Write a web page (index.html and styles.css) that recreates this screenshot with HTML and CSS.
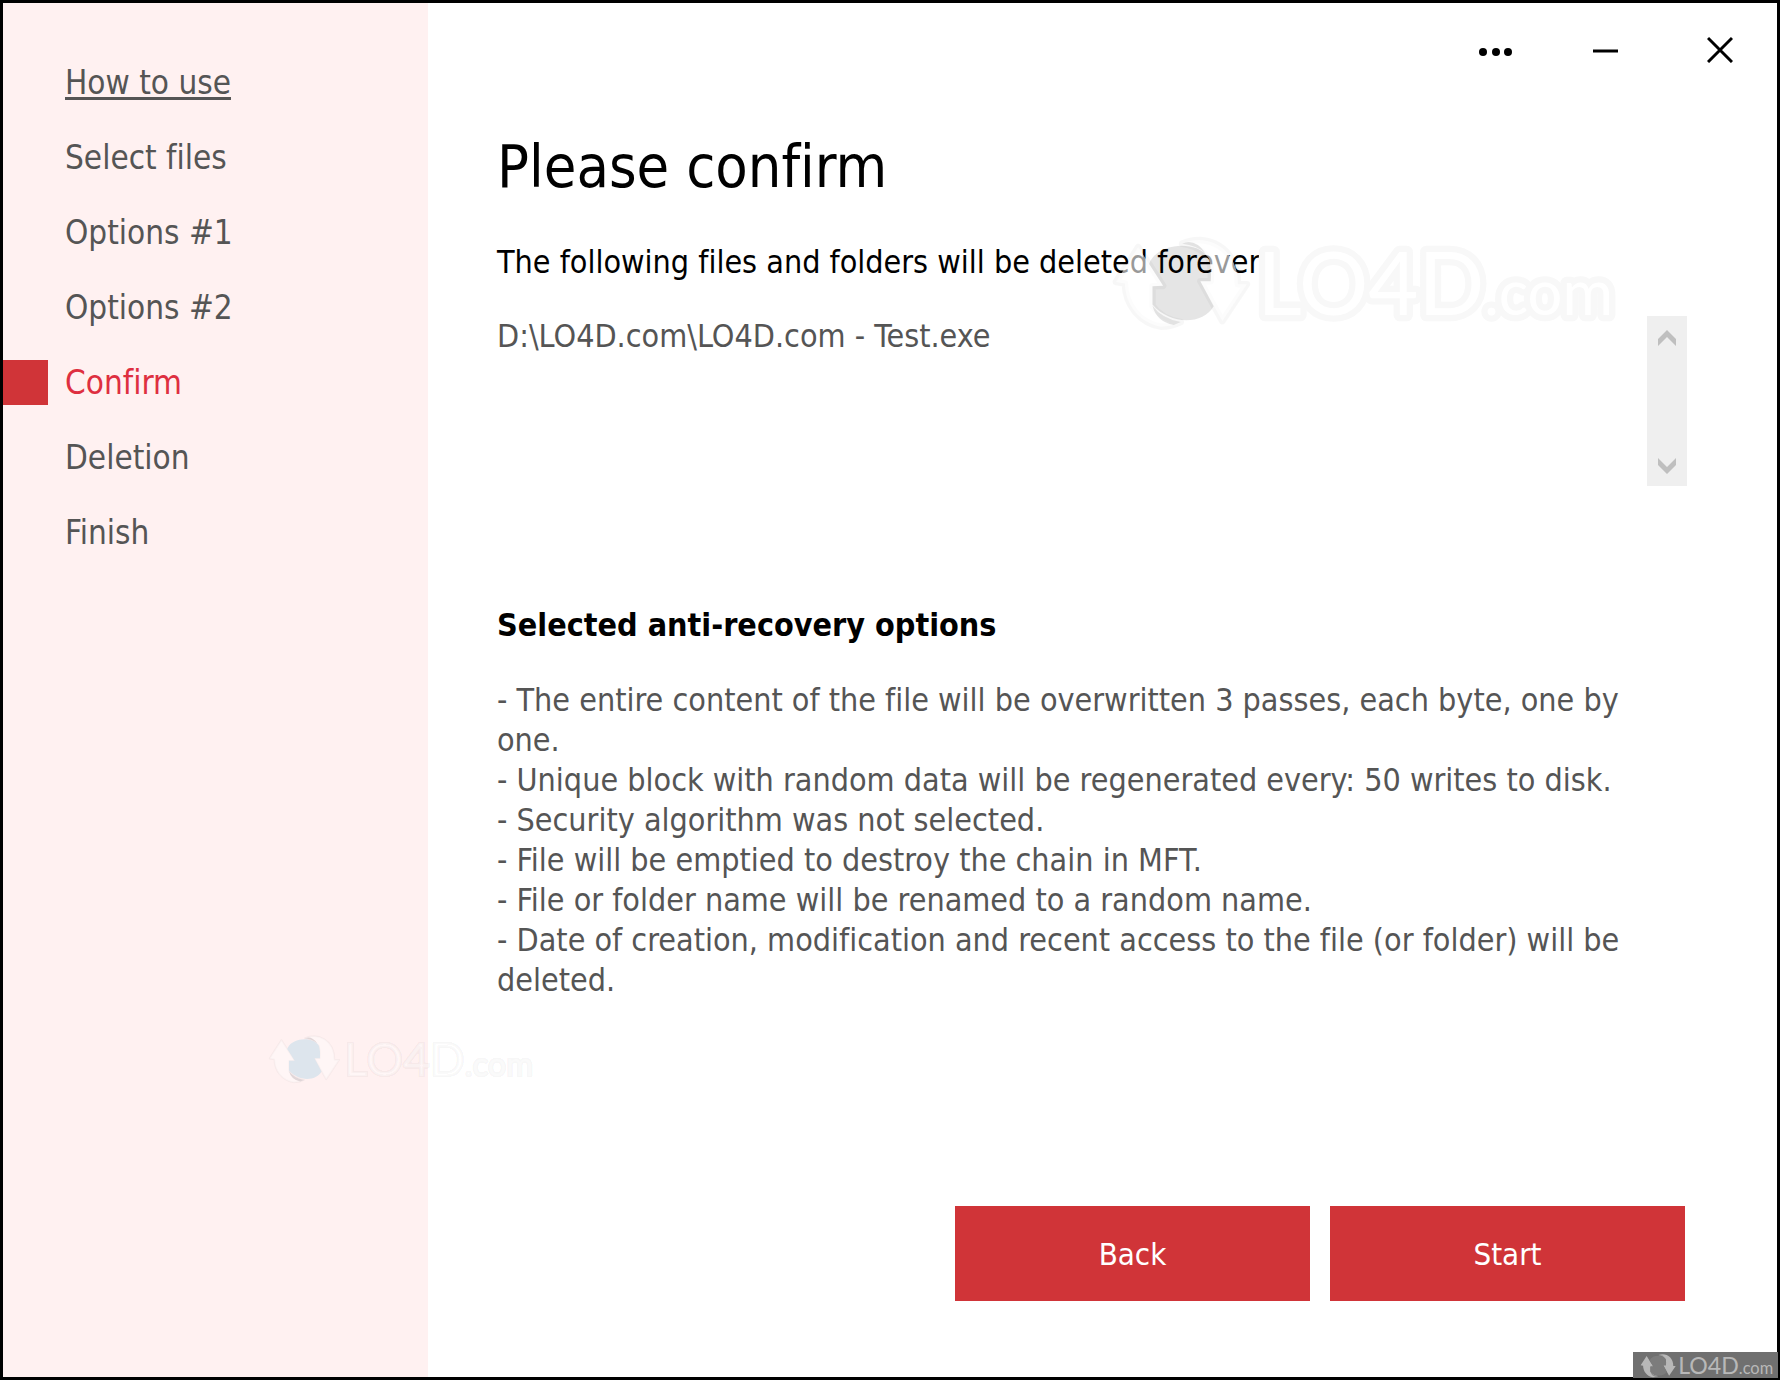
FILE: index.html
```html
<!DOCTYPE html>
<html lang="en">
<head>
    <meta charset="UTF-8">
    <meta name="viewport" content="width=device-width, initial-scale=1.0">
    <title>Please confirm</title>
    <link rel="stylesheet" href="styles.css">
</head>
<body>
    <svg class="defs" aria-hidden="true">
        <symbol id="arrows" viewBox="30 20 430 300" overflow="visible">
            <path d="M115 65 L190 182 L158 183 V242 Q185 280 243 291 Q215 305 185 305 C120 295 76 240 75 175 L48 170 Z"/>
            <path d="M368 288 L302 168 L333 168 Q336 130 328 100 Q300 62 247 55 C320 22 415 65 415 177 L442 177 Z"/>
            <path class="ball" d="M150 110 C180 48 300 45 328 100 Q336 130 333 168 L302 168 L342 243 C310 300 210 300 158 238 L158 183 L190 182 L148 116 Z"/>
            <path class="shade" d="M158 242 Q185 280 243 291 L222 300 Q170 290 158 242 Z M247 55 Q285 38 318 84 Q290 60 247 55 Z"/>
        </symbol>
    </svg>

    <div class="window">
        <nav class="steps">
            <a href="#" class="help">How to use</a>
            <a href="#">Select files</a>
            <a href="#">Options #1</a>
            <a href="#">Options #2</a>
            <a href="#" class="active" aria-current="step">Confirm</a>
            <a href="#">Deletion</a>
            <a href="#">Finish</a>
        </nav>

        <main class="content">
            <div class="window-buttons">
                <button type="button" aria-label="More">
                    <svg width="36" height="28" viewBox="0 0 36 28"><circle cx="6" cy="17" r="4"/><circle cx="19" cy="17" r="4"/><circle cx="31" cy="17" r="4"/></svg>
                </button>
                <button type="button" aria-label="Minimize">
                    <svg width="36" height="28" viewBox="0 0 36 28"><path d="M1 16 H26"/></svg>
                </button>
                <button type="button" aria-label="Close">
                    <svg width="26" height="28" viewBox="0 0 26 28"><path d="M1 3 L25 27 M25 3 L1 27"/></svg>
                </button>
            </div>

            <h1>Please confirm</h1>
            <p class="lead">The following files and folders will be deleted forever</p>

            <div class="files">
                <p>D:\LO4D.com\LO4D.com - Test.exe</p>
                <div class="scrollbar">
                    <button type="button" aria-label="Scroll up">
                        <svg width="18" height="16" viewBox="0 0 18 16"><path d="M0 9 L9 0 L18 9 V16 L9 7 L0 16 Z"/></svg>
                    </button>
                    <button type="button" aria-label="Scroll down">
                        <svg width="18" height="16" viewBox="0 0 18 16"><path d="M0 0 L9 9 L18 0 V7 L9 16 L0 7 Z"/></svg>
                    </button>
                </div>
            </div>

            <h2>Selected anti-recovery options</h2>
            <ul class="options">
                <li>- The entire content of the file will be overwritten 3 passes, each byte, one by one.</li>
                <li>- Unique block with random data will be regenerated every: 50 writes to disk.</li>
                <li>- Security algorithm was not selected.</li>
                <li>- File will be emptied to destroy the chain in MFT.</li>
                <li>- File or folder name will be renamed to a random name.</li>
                <li>- Date of creation, modification and recent access to the file (or folder) will be deleted.</li>
            </ul>

            <div class="actions">
                <button type="button">Back</button>
                <button type="button">Start</button>
            </div>
        </main>
    </div>

    <svg class="mark mark-top" viewBox="0 0 800 155">
        <use href="#arrows" x="-5" y="0" width="228" height="159"/>
        <text x="230" y="133">LO4D<tspan class="small">.com</tspan></text>
    </svg>
    <svg class="mark mark-side" viewBox="0 0 800 155">
        <use href="#arrows" x="-5" y="0" width="228" height="159"/>
        <text x="228" y="131">LO4D<tspan class="small">.com</tspan></text>
    </svg>
    <div class="badge">
        <svg class="mark-badge" viewBox="0 0 800 155">
            <use href="#arrows" x="-5" y="0" width="228" height="159"/>
            <text x="228" y="133">LO4D<tspan class="small">.com</tspan></text>
        </svg>
    </div>
</body>
</html>
```

FILE: styles.css
```css
* {
    box-sizing: border-box;
    margin: 0;
    padding: 0;
}

body {
    position: relative;
    background-color: #fff;
    color: #555;
    font-family: "DejaVu Sans Condensed", "Noto Sans", sans-serif;
    font-size: 32px;
    font-variant-ligatures: none;
    line-height: 40px;
}

button {
    border: none;
    background: none;
    font: inherit;
    cursor: pointer;
}

.defs {
    position: absolute;
    width: 0;
    height: 0;
}

.window {
    display: grid;
    grid-template-columns: 425px 1fr;
    min-height: 100vh;
    border: 3px solid #000;
}

/* steps */

.steps {
    padding-top: 42px;
    background-color: #fff1f1;
}

.steps a {
    display: flex;
    align-items: center;
    height: 75px;
    padding-left: 62px;
    color: #555;
    font-size: 33px;
    text-decoration: none;
}

.steps .help {
    text-decoration: underline;
    text-decoration-thickness: 3px;
    text-underline-offset: 3px;
}

.steps .active {
    gap: 17px;
    padding-left: 0;
    color: #de2f40;
}

.steps .active::before {
    content: "";
    width: 45px;
    height: 45px;
    background-color: #d03438;
}

/* main area */

.content {
    display: flex;
    flex-direction: column;
    padding: 32px 90px 76px 69px;
}

.window-buttons {
    display: flex;
    justify-content: flex-end;
    gap: 79px;
    margin-right: -46px;
}

.window-buttons svg {
    display: block;
    fill: #000;
}

.window-buttons path {
    fill: none;
    stroke: #000;
    stroke-width: 3;
}

h1 {
    margin-top: 64px;
    color: #000;
    font-size: 59px;
    font-weight: normal;
    line-height: 80px;
}

.lead {
    margin-top: 35px;
    color: #000;
}

.files {
    display: flex;
    justify-content: space-between;
    height: 170px;
    margin-top: 34px;
}

.scrollbar {
    display: flex;
    flex-direction: column;
    justify-content: space-between;
    width: 40px;
    padding: 14px 0 12px;
    background-color: #efefef;
}

.scrollbar svg {
    display: block;
    margin: 0 auto;
    fill: #bfbfbf;
}

h2 {
    margin-top: 119px;
    color: #000;
    font-size: 32px;
    line-height: 40px;
}

.options {
    margin-top: 35px;
    padding-right: 40px;
    list-style: none;
}

.actions {
    display: flex;
    justify-content: flex-end;
    gap: 20px;
    margin-top: auto;
    padding-right: 2px;
}

.actions button {
    width: 355px;
    height: 95px;
    background-color: #d03438;
    color: #fff;
    font-size: 31px;
}

/* watermarks */

.mark,
.mark-badge {
    overflow: visible;
    font-family: Lato, sans-serif;
    font-size: 138px;
    --ball: #dedede;
    --shade: #cfcfcf;
}

.small {
    font-size: 98px;
}

.mark {
    position: absolute;
    pointer-events: none;
    fill: #fff;
    stroke-linejoin: round;
    paint-order: stroke;
}

.mark-top {
    top: 232px;
    left: 1113px;
    width: 502px;
    stroke: #f8f8f8;
    stroke-width: 20px;
    --ball: rgba(0, 0, 0, 0.1);
    --shade: rgba(0, 0, 0, 0.1);
}

.mark-top use {
    fill: rgba(255, 255, 255, 0.6);
    stroke: rgba(0, 0, 0, 0.03);
}

.mark-side {
    top: 1032px;
    left: 268px;
    width: 267px;
    fill: rgba(255, 255, 255, 0.4);
    stroke: rgba(0, 0, 0, 0.03);
    stroke-width: 10px;
    --ball: #dde5ed;
    --shade: #e0d6d8;
}

.ball {
    fill: var(--ball);
    stroke: none;
}

.shade {
    fill: var(--shade);
    stroke: none;
}

.badge {
    position: absolute;
    right: 2px;
    bottom: 2px;
    width: 145px;
    height: 26px;
    padding-left: 6px;
    background-color: #707070;
}

.mark-badge {
    display: block;
    width: 136px;
    height: 26px;
    fill: #b8b8b8;
    --ball: #7c7c7c;
    --shade: #8c8c8c;
}
```
